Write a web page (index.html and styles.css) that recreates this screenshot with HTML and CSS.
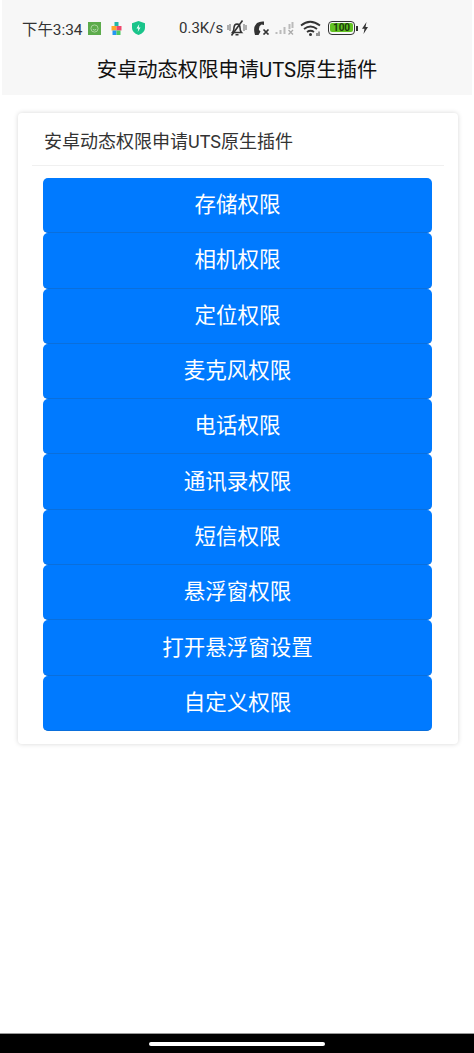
FILE: index.html
```html
<!DOCTYPE html>
<html lang="zh-CN">

<head>
    <meta charset="UTF-8">
    <meta name="viewport" content="width=device-width, initial-scale=1.0">
    <title>安卓动态权限申请UTS原生插件</title>
    <link rel="stylesheet" href="styles.css">
</head>

<body>

    <div class="screen">
        <header class="top-bar">
            <div class="status-bar">
                <span class="clock">下午3:34</span>
                <svg class="app-icon icon-face" viewBox="0 0 13 13">
                    <rect width="13" height="13" fill="#5cab4b"/>
                    <circle cx="6.500" cy="6.500" r="3.600" fill="none" stroke="#a9d49c" stroke-width="1"/>
                    <path d="M4.800 7.400q1.700 1.400 3.400 0" fill="none" stroke="#c8e6c9" stroke-width=".8"/>
                </svg>
                <svg class="app-icon icon-star" viewBox="0 0 13 13">
                    <path d="M4.500 0h4v4h-4z" fill="#22b8a8"/>
                    <path d="M1.500 4h5v4.500h-5z" fill="#ffa726"/>
                    <path d="M6.500 4h5v4.500h-5z" fill="#f0476c"/>
                    <path d="M2.500 8.500h4V13h-4z" fill="#2196f3"/>
                    <path d="M6.500 8.500h4V13h-4z" fill="#4cc95f"/>
                </svg>
                <svg class="app-icon icon-shield" viewBox="0 0 13 14">
                    <path d="M6.500 0L13 2.200V7q0 4.500-6.500 7Q0 11.500 0 7V2.200z" fill="#19c48a"/>
                    <path d="M7.300 3L4.500 7.600h1.900L5.700 11l2.800-4.600H6.600z" fill="#fff"/>
                </svg>
                <span class="speed">0.3K/s</span>
                <svg class="sys-icon icon-mute" viewBox="0 0 20 16">
                    <path d="M5.500 12.500q1.500-1.500 1.500-5 .3-3.500 3-3.500 3 .2 3 3.500 0 3.500 1.500 5z" fill="none" stroke="#333" stroke-width="1.600"/>
                    <path d="M8.500 14.800h3M15.500 .5L4.500 15.500" fill="none" stroke="#333" stroke-width="1.600"/>
                    <path d="M1 5v5M3 4v7M17 4v7M19 5v5" fill="none" stroke="#666" stroke-width="1"/>
                </svg>
                <svg class="sys-icon icon-call" viewBox="0 0 17 14">
                    <path d="M2 14Q-.5 6 4 2 7 0 11 .5V4L8.500 3.600Q5.500 5 6 9l1.500 1.500L5.500 14z" fill="#333"/>
                    <path d="M10.500 8.500l5 5m0-5l-5 5" stroke="#333" stroke-width="1.700"/>
                </svg>
                <svg class="sys-icon icon-signal" viewBox="0 0 20 14">
                    <path d="M1 11h2v2H1zM5 9h2v4H5zM9 6h2v7H9zM14 3h2v5h-2z" fill="#bbb"/>
                    <path d="M17 1h2v6h-2z" fill="#bbb"/>
                    <path d="M14 9l4.500 4.500m0-4.500L14 13.500" stroke="#aaa" stroke-width="1.300"/>
                </svg>
                <svg class="sys-icon icon-wifi" viewBox="0 0 21 16">
                    <path d="M1 5.500q9-7.500 19 0M4 9q6.500-5 13 0M7 12q3.500-2.500 7 0" fill="none" stroke="#333" stroke-width="1.800"/>
                    <circle cx="10.500" cy="14.500" r="1.500" fill="#333"/>
                    <path d="M16.500 13h1v3h-1zM18.500 11.500h1V16h-1z" fill="#333"/>
                </svg>
                <div class="battery">
                    <span class="battery-level">100</span>
                </div>
                <span class="battery-tip"></span>
                <svg class="sys-icon icon-bolt" viewBox="0 0 8 12">
                    <path d="M5.500 0L1 6.800h2.500L2.500 12l4.500-7H4.500z" fill="#333"/>
                </svg>
            </div>
            <div class="nav-title">安卓动态权限申请UTS原生插件</div>
        </header>

        <main class="content">
            <section class="card">
                <div class="card-header">安卓动态权限申请UTS原生插件</div>
                <div class="btn-list">
                    <button class="btn">存储权限</button>
                    <button class="btn">相机权限</button>
                    <button class="btn">定位权限</button>
                    <button class="btn">麦克风权限</button>
                    <button class="btn">电话权限</button>
                    <button class="btn">通讯录权限</button>
                    <button class="btn">短信权限</button>
                    <button class="btn">悬浮窗权限</button>
                    <button class="btn">打开悬浮窗设置</button>
                    <button class="btn">自定义权限</button>
                </div>
            </section>
        </main>

        <footer class="nav-bar">
            <span class="home-pill"></span>
        </footer>
    </div>

</body>

</html>
```

FILE: styles.css
```css
* {
    box-sizing: border-box;
    margin: 0;
    padding: 0;
    font-family: "Roboto", "Noto Sans CJK SC", sans-serif;
}

body {
    background: #fff;
}

.screen {
    display: flex;
    flex-direction: column;
    height: 1053px;
    overflow: hidden;
}

.top-bar {
    height: 95px;
    margin: 0 2px;
    background: #f7f7f7;
    flex-shrink: 0;
}

.status-bar {
    display: flex;
    align-items: center;
    height: 56px;
    padding-left: 20px;
    color: #333;
}

.clock {
    font-size: 15.400px;
    width: 66px;
    white-space: nowrap;
}

.app-icon {
    width: 13px;
    height: 13px;
}

.icon-star {
    margin-left: 9px;
}

.icon-shield {
    margin-left: 9px;
    height: 14px;
}

.speed {
    font-size: 15px;
    margin-left: 34px;
    width: 47px;
}

.sys-icon {
    display: block;
}

.icon-mute {
    width: 22px;
    height: 16px;
}

.icon-call {
    width: 17px;
    height: 14px;
    margin-left: 5px;
}

.icon-signal {
    width: 21px;
    height: 14px;
    margin-left: 4px;
}

.icon-wifi {
    width: 21px;
    height: 16px;
    margin-left: 5px;
}

.battery {
    width: 27px;
    height: 14px;
    margin-left: 7px;
    padding: 1px;
    border: 1.500px solid #333;
    border-radius: 4px;
}

.battery-level {
    display: block;
    height: 9px;
    background: #63c322;
    border-radius: 2px;
    color: #1d3d0e;
    font-size: 10px;
    font-weight: 700;
    line-height: 9px;
    text-align: center;
}

.battery-tip {
    width: 2px;
    height: 5px;
    margin-left: 1px;
    background: #333;
}

.icon-bolt {
    width: 8px;
    height: 12px;
    margin-left: 3px;
}

.nav-title {
    font-size: 20.300px;
    line-height: 28px;
    text-align: center;
    color: #111;
}

.content {
    flex: 1;
    padding: 18px 16px 0 18px;
}

.card {
    background: #fff;
    border-radius: 4px;
    box-shadow: 0 0 5px rgba(0, 0, 0, 0.16);
    padding: 0 14px 13px;
}

.card-header {
    height: 53px;
    padding-left: 12px;
    border-bottom: 1px solid #f0f0f0;
    color: #333;
    font-size: 18px;
    line-height: 57px;
}

.btn-list {
    display: flex;
    flex-direction: column;
    margin: 12px 12px 0 11px;
}

.btn {
    height: 55.300px;
    padding-bottom: 5px;
    background: #007aff;
    border: none;
    border-bottom: 1px solid #0a6fdc;
    border-radius: 5px;
    color: #fff;
    font-size: 21.500px;
    cursor: pointer;
}

.nav-bar {
    display: flex;
    align-items: center;
    justify-content: center;
    height: 20px;
    background: #000;
    border-top: 1px solid #999;
    flex-shrink: 0;
}

.home-pill {
    width: 176px;
    height: 4px;
    background: #fff;
    border-radius: 2px;
}
```
